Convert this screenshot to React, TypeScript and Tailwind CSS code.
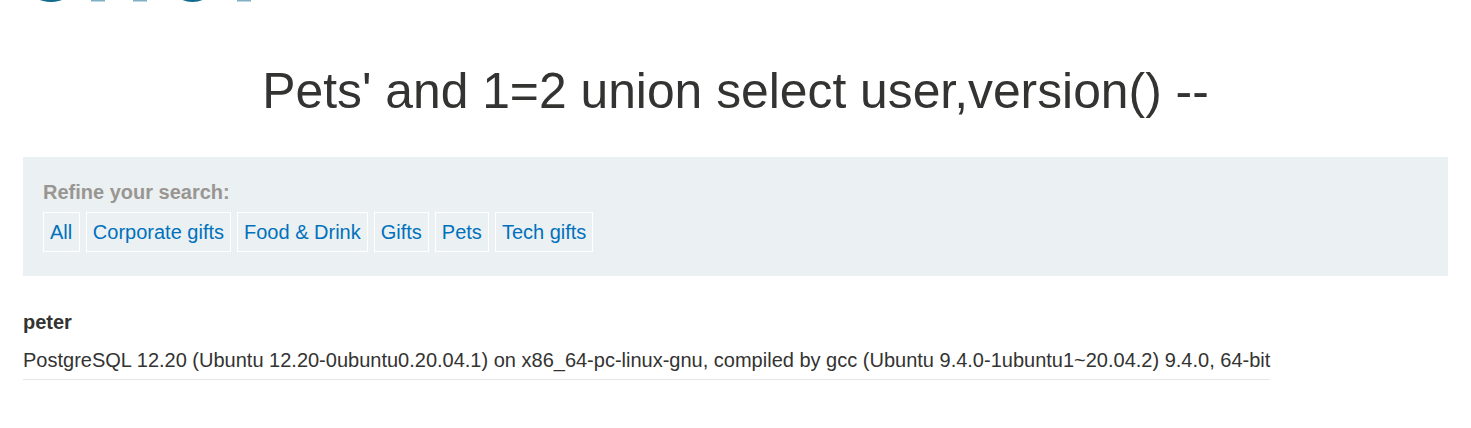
const categories = ["All", "Corporate gifts", "Food & Drink", "Gifts", "Pets", "Tech gifts"];

const Logo = () => (
  <svg width="260" height="4" viewBox="0 0 260 4" className="block" fill="none">
    <ellipse cx="51" cy="-10" rx="20" ry="12" fill="#0f6a8b" />
    <rect x="91" y="0" width="14" height="1.5" fill="#7fb0c4" />
    <rect x="133" y="0" width="14" height="1.5" fill="#7fb0c4" />
    <ellipse cx="192.5" cy="-10" rx="18" ry="12" fill="#0f6a8b" />
    <rect x="237" y="0" width="14" height="1.5" fill="#7fb0c4" />
  </svg>
);

export default function App() {
  return (
    <div className="min-h-[428px] bg-white font-['Liberation_Sans',Arial,sans-serif] text-[#333332]">
      <Logo />
      <div className="px-[23px]">
        <h1 className="mt-[56px] text-center text-[49.8px] leading-[62px]">
          Pets' and 1=2 union select user,version() --
        </h1>
        <section className="mt-[35px] h-[119px] bg-[#ebf0f2] px-5 pt-[23px]">
          <div className="text-[20px] font-bold leading-[24px] text-[#999692]">Refine your search:</div>
          <div className="mt-[8px] flex gap-[6px]">
            {categories.map((c) => (
              <a key={c} className="h-10 border border-white px-[6px] first:pr-[6.6px] text-[20px] leading-[38px] text-[#0071bc]">
                {c}
              </a>
            ))}
          </div>
        </section>
        <table className="mt-[33px] border-collapse text-[20px]">
          <tbody>
            <tr>
              <th className="h-[26px] p-0 text-left font-bold leading-[26px]">peter</th>
            </tr>
            <tr className="border-b border-[#e6e6e6]">
              <td className="p-0 pt-[13px] pb-[7px] leading-[24px]">
                PostgreSQL 12.20 (Ubuntu 12.20-0ubuntu0.20.04.1) on x86_64-pc-linux-gnu, compiled by gcc (Ubuntu 9.4.0-1ubuntu1~20.04.2) 9.4.0, 64-bit
              </td>
            </tr>
          </tbody>
        </table>
      </div>
    </div>
  );
}
